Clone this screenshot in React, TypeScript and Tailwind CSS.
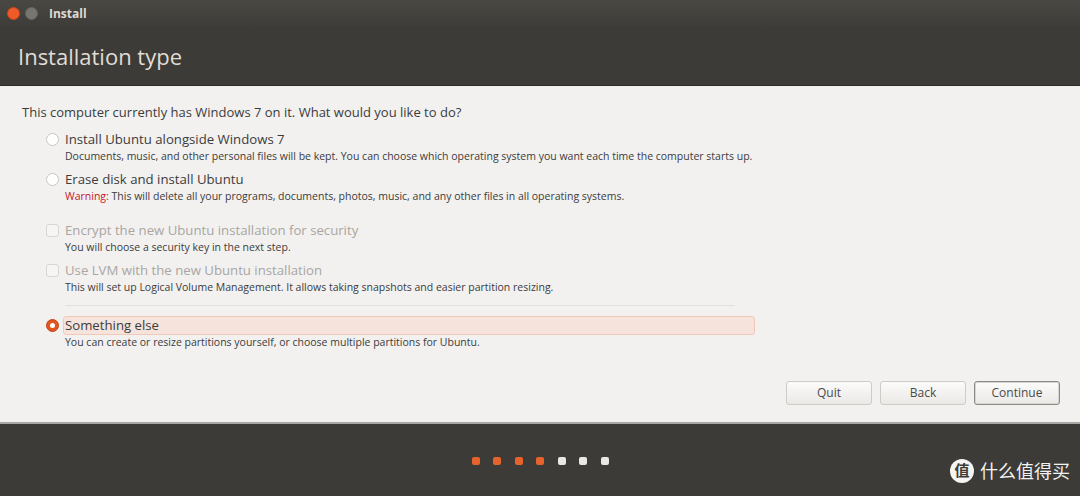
import type { ReactNode } from 'react'

const FONT = { fontFamily: '"Open Sans", "Noto Sans", sans-serif' }

function Radio({ checked }: { checked?: boolean }) {
  if (checked) {
    return (
      <span className="w-[13px] h-[13px] rounded-full bg-[#e2561f] border border-[#c2441a] flex items-center justify-center shrink-0">
        <span className="w-[5px] h-[5px] rounded-full bg-white" />
      </span>
    )
  }
  return <span className="w-[13px] h-[13px] rounded-full bg-white border border-[#c9c6c2] shrink-0" />
}

function Checkbox() {
  return <span className="w-[13px] h-[13px] rounded-[3px] bg-[#f6f5f4] border border-[#d9d6d2] shrink-0" />
}

function Option({
  control,
  label,
  desc,
  disabled,
  selected,
}: {
  control: ReactNode
  label: string
  desc: ReactNode
  disabled?: boolean
  selected?: boolean
}) {
  return (
    <div className="flex flex-col">
      <div className="flex items-center gap-[6px] ml-[46px]">
        {control}
        <div
          className={
            selected
              ? 'w-[692px] h-[19px] flex items-center pl-[1px] -ml-[2px] rounded-[3px] bg-[#f5e3dc] border border-[#f1c9b8]'
              : 'h-[19px] flex items-center'
          }
        >
          <span className={disabled ? 'text-[13.2px] text-[#a9a6a2]' : 'text-[13.2px] text-[#3c3c3c]'}>{label}</span>
        </div>
      </div>
      <div className="ml-[65px] text-[10.5px] leading-[14px] text-[#3c3c3c]">{desc}</div>
    </div>
  )
}

function Btn({ children, primary }: { children: string; primary?: boolean }) {
  return (
    <button
      className={
        'w-[86px] h-[24px] rounded-[3px] text-[12px] text-[#4a4a4a] bg-gradient-to-b from-[#fbfbfa] to-[#ebe9e6] border ' +
        (primary ? 'border-[#8c8986] shadow-[inset_0_0_0_1px_#d8d5d1]' : 'border-[#cfccc8]')
      }
    >
      {children}
    </button>
  )
}

export default function App() {
  const dots = ['#e6642b', '#e6642b', '#e6642b', '#e6642b', '#e8e8e6', '#e8e8e6', '#e8e8e6']
  return (
    <div className="w-[1080px] h-[496px] flex flex-col bg-[#3c3b37] overflow-hidden" style={FONT}>
      {/* title bar */}
      <div className="h-[27px] flex items-center px-[7px] gap-[5px] bg-gradient-to-b from-[#4a4843] to-[#3d3c38]">
        <span className="w-[13px] h-[13px] rounded-full bg-[#f05a28] border border-[#c7461a]" />
        <span className="w-[13px] h-[13px] rounded-full bg-[#77756f] border border-[#66645f]" />
        <span className="ml-[6px] text-[12px] font-bold text-[#dfdbd2]">Install</span>
      </div>

      {/* header */}
      <div className="h-[59px] flex items-center pl-[18px] pt-[1px] border-b border-[#2e2d2a]">
        <span className="text-[22px] text-[#e0ddd6]">Installation type</span>
      </div>

      {/* body */}
      <div className="h-[338px] bg-[#f2f1f0] border-b-2 border-[#a9a7a3] flex flex-col">
        <div className="pl-[22px] pt-[17px] text-[13px] leading-[18px] text-[#3c3c3c]">
          This computer currently has Windows 7 on it. What would you like to do?
        </div>

        <div className="flex flex-col gap-[7px] mt-[9px]">
          <Option
            control={<Radio />}
            label="Install Ubuntu alongside Windows 7"
            desc="Documents, music, and other personal files will be kept. You can choose which operating system you want each time the computer starts up."
          />
          <Option
            control={<Radio />}
            label="Erase disk and install Ubuntu"
            desc={
              <>
                <span className="text-[#c7162b]">Warning:</span> This will delete all your programs, documents, photos, music, and any other files in all operating systems.
              </>
            }
          />
        </div>

        <div className="flex flex-col gap-[7px] mt-[18px]">
          <Option control={<Checkbox />} label="Encrypt the new Ubuntu installation for security" desc="You will choose a security key in the next step." disabled />
          <Option
            control={<Checkbox />}
            label="Use LVM with the new Ubuntu installation"
            desc="This will set up Logical Volume Management. It allows taking snapshots and easier partition resizing."
            disabled
          />
        </div>

        <div className="ml-[65px] w-[670px] h-px bg-[#e2e0dd] mt-[11px]" />

        <div className="mt-[10px]">
          <Option
            control={<Radio checked />}
            label="Something else"
            desc="You can create or resize partitions yourself, or choose multiple partitions for Ubuntu."
            selected
          />
        </div>

        <div className="flex justify-end gap-[8px] pr-[20px] mt-[32px]">
          <Btn>Quit</Btn>
          <Btn>Back</Btn>
          <Btn primary>Continue</Btn>
        </div>
      </div>

      {/* footer */}
      <div className="flex-1 relative flex items-center justify-center">
        <div className="flex gap-[13.5px] mt-[2px]">
          {dots.map((c, i) => (
            <span key={i} className="w-[8px] h-[8px] rounded-[2px]" style={{ backgroundColor: c }} />
          ))}
        </div>
        <div className="absolute right-[10px] bottom-[12px] flex items-center gap-[6px]">
          <span
            className="w-[24px] h-[24px] rounded-full bg-[#f4f4f4] flex items-center justify-center text-[15px] font-bold text-[#3c3b37]"
            style={{ fontFamily: '"Noto Sans CJK SC", sans-serif' }}
          >
            值
          </span>
          <span className="text-[18px] text-[#f2f2f2]" style={{ fontFamily: '"Noto Sans CJK SC", sans-serif' }}>
            什么值得买
          </span>
        </div>
      </div>
    </div>
  )
}
